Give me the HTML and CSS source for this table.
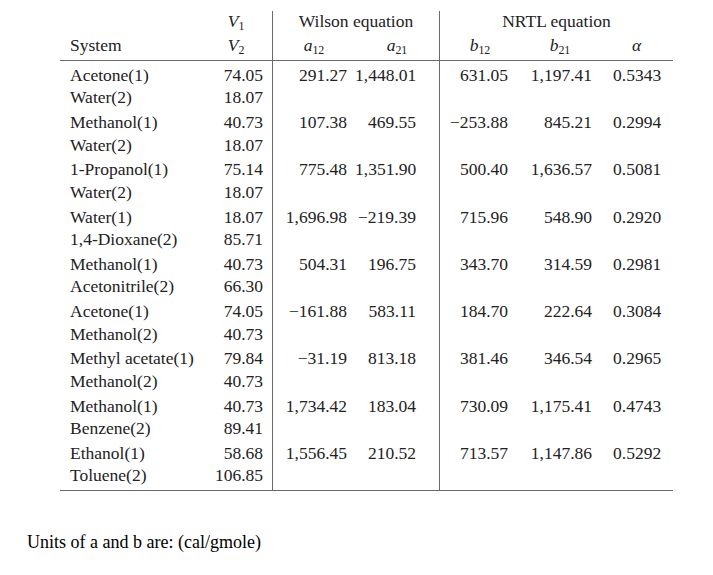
FILE: index.html
```html
<!DOCTYPE html>
<html>
<head>
<meta charset="utf-8">
<link rel="stylesheet" href="styles.css">
</head>
<body>
<div class="tablewrap">
  <div class="cols head">
    <div class="hc"></div>
    <div class="hc ctr"><i>V</i><sub>1</sub></div>
    <div class="hc ctr sep span2">Wilson equation</div>
    <div class="hc ctr sep span3">NRTL equation</div>

    <div class="hb sys">System</div>
    <div class="hb ctr"><i>V</i><sub>2</sub></div>
    <div class="hb ctr sep"><i>a</i><sub>12</sub></div>
    <div class="hb ctr"><i>a</i><sub>21</sub></div>
    <div class="hb ctr sep"><i>b</i><sub>12</sub></div>
    <div class="hb ctr"><i>b</i><sub>21</sub></div>
    <div class="hb ctr"><i>α</i></div>
  </div>

  <div class="cols body">
    <div class="c sys">Acetone(1)<br>Water(2)</div>
    <div class="c v">74.05<br>18.07</div>
    <div class="c a12 sep">291.27</div>
    <div class="c a21">1,448.01</div>
    <div class="c b12 sep">631.05</div>
    <div class="c b21">1,197.41</div>
    <div class="c al">0.5343</div>

    <div class="c sys">Methanol(1)<br>Water(2)</div>
    <div class="c v">40.73<br>18.07</div>
    <div class="c a12 sep">107.38</div>
    <div class="c a21">469.55</div>
    <div class="c b12 sep">−253.88</div>
    <div class="c b21">845.21</div>
    <div class="c al">0.2994</div>

    <div class="c sys">1-Propanol(1)<br>Water(2)</div>
    <div class="c v">75.14<br>18.07</div>
    <div class="c a12 sep">775.48</div>
    <div class="c a21">1,351.90</div>
    <div class="c b12 sep">500.40</div>
    <div class="c b21">1,636.57</div>
    <div class="c al">0.5081</div>

    <div class="c sys">Water(1)<br>1,4-Dioxane(2)</div>
    <div class="c v">18.07<br>85.71</div>
    <div class="c a12 sep">1,696.98</div>
    <div class="c a21">−219.39</div>
    <div class="c b12 sep">715.96</div>
    <div class="c b21">548.90</div>
    <div class="c al">0.2920</div>

    <div class="c sys">Methanol(1)<br>Acetonitrile(2)</div>
    <div class="c v">40.73<br>66.30</div>
    <div class="c a12 sep">504.31</div>
    <div class="c a21">196.75</div>
    <div class="c b12 sep">343.70</div>
    <div class="c b21">314.59</div>
    <div class="c al">0.2981</div>

    <div class="c sys">Acetone(1)<br>Methanol(2)</div>
    <div class="c v">74.05<br>40.73</div>
    <div class="c a12 sep">−161.88</div>
    <div class="c a21">583.11</div>
    <div class="c b12 sep">184.70</div>
    <div class="c b21">222.64</div>
    <div class="c al">0.3084</div>

    <div class="c sys">Methyl acetate(1)<br>Methanol(2)</div>
    <div class="c v">79.84<br>40.73</div>
    <div class="c a12 sep">−31.19</div>
    <div class="c a21">813.18</div>
    <div class="c b12 sep">381.46</div>
    <div class="c b21">346.54</div>
    <div class="c al">0.2965</div>

    <div class="c sys">Methanol(1)<br>Benzene(2)</div>
    <div class="c v">40.73<br>89.41</div>
    <div class="c a12 sep">1,734.42</div>
    <div class="c a21">183.04</div>
    <div class="c b12 sep">730.09</div>
    <div class="c b21">1,175.41</div>
    <div class="c al">0.4743</div>

    <div class="c sys">Ethanol(1)<br>Toluene(2)</div>
    <div class="c v">58.68<br>106.85</div>
    <div class="c a12 sep">1,556.45</div>
    <div class="c a21">210.52</div>
    <div class="c b12 sep">713.57</div>
    <div class="c b21">1,147.86</div>
    <div class="c al">0.5292</div>
  </div>
</div>
<p class="note">Units of a and b are: (cal/gmole)</p>
</body>
</html>
```

FILE: styles.css
```css
html, body {
  margin: 0;
  padding: 0;
  background: #ffffff;
}

body {
  font-family: "Liberation Serif", "DejaVu Serif", serif;
  color: #000;
}

.tablewrap {
  padding: 11px 0 0 60px;
  color: #222222;
  font-size: 17.5px;
}

.cols {
  display: grid;
  grid-template-columns: 140px 72px 83px 84px 81px 80px 73px;
  width: 613px;
}

.head {
  border-bottom: 1px solid #6a6a6a;
}

.body {
  border-bottom: 1px solid #6a6a6a;
}

.sep {
  border-left: 1px solid #6a6a6a;
}

.span2 {
  grid-column: span 2;
}

.span3 {
  grid-column: span 3;
}

.hc {
  line-height: 20px;
  height: 20px;
}

.hb {
  line-height: 28px;
  padding-bottom: 1px;
}

.ctr {
  text-align: center;
}

.sys {
  padding-left: 10px;
}

sub {
  font-size: 0.68em;
  vertical-align: -0.28em;
  line-height: 0;
}

.c {
  line-height: 22.5px;
  padding-top: 2.25px;
  white-space: nowrap;
}

.body > .c:nth-child(-n+7) {
  padding-top: 2.75px;
}

.body > .c:nth-last-child(-n+7) {
  padding-bottom: 3px;
}

.v {
  text-align: right;
  padding-right: 9px;
}

.a12 {
  text-align: right;
  padding-right: 8px;
}

.a21 {
  text-align: right;
  padding-right: 23px;
}

.b12 {
  text-align: right;
  padding-right: 12px;
}

.b21 {
  text-align: right;
  padding-right: 8px;
}

.al {
  padding-left: 13px;
}

.note {
  margin: 41px 0 0 27px;
  font-size: 18px;
  line-height: 21px;
  color: #000;
}
```
